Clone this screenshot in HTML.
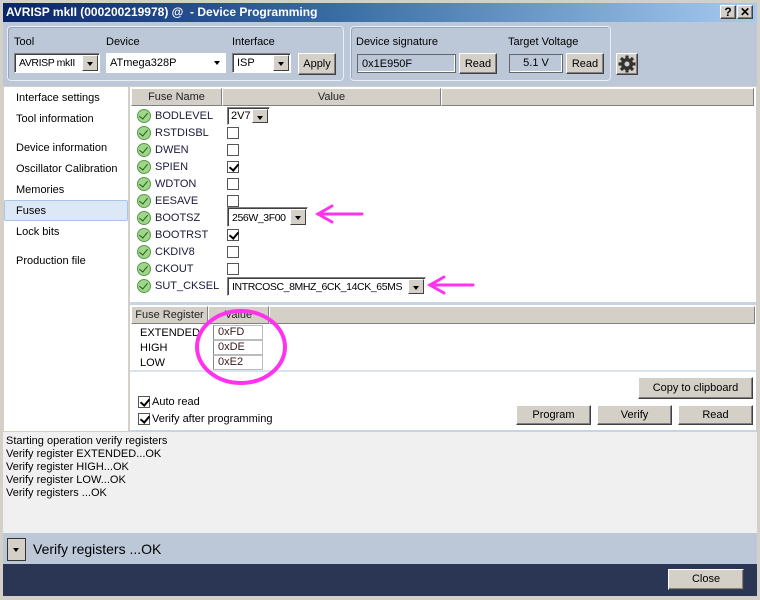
<!DOCTYPE html>
<html><head><meta charset="utf-8"><style>
*{box-sizing:border-box;margin:0;padding:0}
body{width:760px;height:600px;overflow:hidden;background:#d4d0c8;font-family:"Liberation Sans",sans-serif;font-size:11px;color:#000;position:relative}
.a{position:absolute}
.btn{position:absolute;background:#d4d0c8;border:1px solid;border-color:#fff #404040 #404040 #fff;box-shadow:inset -1px -1px #808080;text-align:center;font-size:11px}
.sunk{position:absolute;background:#fff;border:1px solid;border-color:#808080 #fff #fff #808080;box-shadow:inset 1px 1px #404040;white-space:nowrap;overflow:hidden}
.dd{position:absolute;width:16px;background:#d4d0c8;border:1px solid;border-color:#fff #404040 #404040 #fff;top:1px;right:1px;bottom:1px}
.dd:after{content:"";position:absolute;left:4px;top:6px;border-left:3px solid transparent;border-right:3px solid transparent;border-top:4px solid #000}
.hdr{position:absolute;background:#d4d0c8;border:1px solid;border-color:#fff #808080 #808080 #fff;text-align:center;font-size:11px;line-height:17px;color:#222;white-space:nowrap}
.ok{position:absolute;left:137px;width:14px;height:14px;border-radius:50%;background:#9ed68a;border:1px solid #5a9a4a}
.ok:after{content:"";position:absolute;left:3px;top:1px;width:4px;height:7px;border:solid #2a5a1a;border-width:0 1.5px 1.5px 0;transform:rotate(40deg)}
.fn{position:absolute;left:155px;font-size:11px;color:#1a1a3a;top:0}
.cb{position:absolute;left:227px;width:12px;height:12px;border:1px solid #555;background:#fff}
.cb.c:after{content:"";position:absolute;left:3px;top:0px;width:4px;height:7px;border:solid #000;border-width:0 2px 2px 0;transform:rotate(40deg)}
.nav{position:absolute;left:16px;font-size:11px}
.log{position:absolute;left:6px;font-size:11px;line-height:13px}
.tight{letter-spacing:-0.4px;font-size:10.5px}
</style></head><body>
<div class="a" style="left:3px;top:3px;width:754px;height:20px;background:linear-gradient(90deg,#0a246a 0%,#3a6ea5 45%,#a6caf0 100%)"></div>
<div class="a" style="left:6px;top:5px;color:#fff;font-weight:bold;font-size:12px">AVRISP mkII (000200219978) @&nbsp; - Device Programming</div>
<div class="btn" style="left:720px;top:5px;width:16px;height:14px;font-weight:bold;line-height:12px;font-size:12px">?</div>
<div class="btn" style="left:737px;top:5px;width:16px;height:14px;font-weight:bold;line-height:12px;font-size:12px">✕</div>
<div class="a" style="left:3px;top:22px;width:754px;height:64px;background:#bcc7d8"></div>
<div class="a" style="left:7px;top:26px;width:337px;height:55px;border:1px solid #e8eef5;border-radius:4px;box-shadow:inset 1px 1px #98a6bc"></div>
<div class="a" style="left:350px;top:26px;width:261px;height:55px;border:1px solid #e8eef5;border-radius:4px;box-shadow:inset 1px 1px #98a6bc"></div>
<div class="a" style="left:14px;top:36px">Tool</div>
<div class="a" style="left:106px;top:36px">Device</div>
<div class="a" style="left:232px;top:36px">Interface</div>
<div class="a" style="left:356px;top:36px">Device signature</div>
<div class="a" style="left:508px;top:36px">Target Voltage</div>
<div class="sunk" style="left:14px;top:53px;width:86px;height:20px"><span class="a tight" style="left:4px;top:3px">AVRISP mkII</span><div class="dd"></div></div>
<div class="a" style="left:106px;top:53px;width:120px;height:20px;background:#fff"><span class="a" style="left:4px;top:4px">ATmega328P</span><span class="a" style="left:108px;top:8px;border-left:3px solid transparent;border-right:3px solid transparent;border-top:4px solid #000"></span></div>
<div class="sunk" style="left:232px;top:53px;width:59px;height:20px"><span class="a" style="left:4px;top:3px">ISP</span><div class="dd"></div></div>
<div class="btn" style="left:298px;top:53px;width:38px;height:22px;line-height:20px">Apply</div>
<div class="a" style="left:357px;top:54px;width:99px;height:19px;border:1px solid #666;background:#bcc7d8;box-shadow:inset -1px -1px #fff"><span class="a" style="left:4px;top:3px">0x1E950F</span></div>
<div class="btn" style="left:459px;top:53px;width:38px;height:21px;line-height:20px">Read</div>
<div class="a" style="left:509px;top:54px;width:54px;height:19px;border:1px solid #666;background:#bcc7d8;box-shadow:inset -1px -1px #fff;text-align:center;line-height:17px">5.1 V</div>
<div class="btn" style="left:566px;top:53px;width:38px;height:21px;line-height:20px">Read</div>
<div class="btn" style="left:616px;top:53px;width:22px;height:22px">
<svg width="20" height="20" viewBox="0 0 20 20" style="position:absolute;left:0;top:0"><g fill="#333" transform="translate(10,10)"><circle r="6"/><rect x="-1.6" y="-8.5" width="3.2" height="17"/><rect x="-8.5" y="-1.6" width="17" height="3.2"/><rect x="-1.6" y="-8.5" width="3.2" height="17" transform="rotate(45)"/><rect x="-1.6" y="-8.5" width="3.2" height="17" transform="rotate(-45)"/><circle r="2.5" fill="#d4d0c8"/></g></svg></div>
<div class="a" style="left:4px;top:87px;width:124px;height:344px;background:#fff"></div>
<div class="nav" style="top:92px">Interface settings</div>
<div class="nav" style="top:113px">Tool information</div>
<div class="nav" style="top:142px">Device information</div>
<div class="nav" style="top:163px">Oscillator Calibration</div>
<div class="nav" style="top:184px">Memories</div>
<div class="a" style="left:4px;top:200px;width:124px;height:21px;background:#dde8f6;border:1px solid #a8c4e8;border-radius:2px"></div>
<div class="nav" style="top:205px">Fuses</div>
<div class="nav" style="top:226px">Lock bits</div>
<div class="nav" style="top:255px">Production file</div>
<div class="a" style="left:130px;top:87px;width:626px;height:344px;background:#fff"></div>
<div class="hdr" style="left:131px;top:88px;width:91px;height:18px">Fuse Name</div>
<div class="hdr" style="left:222px;top:88px;width:219px;height:18px">Value</div>
<div class="hdr" style="left:441px;top:88px;width:313px;height:18px"></div>
<div class="ok" style="top:109px"></div><div class="fn" style="top:110px">BODLEVEL</div>
<div class="ok" style="top:126px"></div><div class="fn" style="top:127px">RSTDISBL</div>
<div class="ok" style="top:143px"></div><div class="fn" style="top:144px">DWEN</div>
<div class="ok" style="top:160px"></div><div class="fn" style="top:161px">SPIEN</div>
<div class="ok" style="top:177px"></div><div class="fn" style="top:178px">WDTON</div>
<div class="ok" style="top:194px"></div><div class="fn" style="top:195px">EESAVE</div>
<div class="ok" style="top:211px"></div><div class="fn" style="top:212px">BOOTSZ</div>
<div class="ok" style="top:228px"></div><div class="fn" style="top:229px">BOOTRST</div>
<div class="ok" style="top:245px"></div><div class="fn" style="top:246px">CKDIV8</div>
<div class="ok" style="top:262px"></div><div class="fn" style="top:263px">CKOUT</div>
<div class="ok" style="top:279px"></div><div class="fn" style="top:280px">SUT_CKSEL</div>
<div class="sunk" style="left:227px;top:107px;width:43px;height:18px"><span class="a" style="left:3px;top:2px">2V7</span><div class="dd"></div></div>
<div class="cb" style="top:127px"></div>
<div class="cb" style="top:144px"></div>
<div class="cb c" style="top:161px"></div>
<div class="cb" style="top:178px"></div>
<div class="cb" style="top:195px"></div>
<div class="sunk" style="left:227px;top:207px;width:81px;height:20px"><span class="a tight" style="left:4px;top:4px">256W_3F00</span><div class="dd"></div></div>
<div class="cb c" style="top:229px"></div>
<div class="cb" style="top:246px"></div>
<div class="cb" style="top:263px"></div>
<div class="sunk" style="left:227px;top:277px;width:199px;height:19px"><span class="a tight" style="left:4px;top:3px">INTRCOSC_8MHZ_6CK_14CK_65MS</span><div class="dd"></div></div>
<div class="a" style="left:130px;top:302px;width:626px;height:3px;background:#c8d4e2"></div>
<div class="hdr" style="left:131px;top:306px;width:77px;height:18px">Fuse Register</div>
<div class="hdr" style="left:208px;top:306px;width:61px;height:18px">Value</div>
<div class="hdr" style="left:269px;top:306px;width:486px;height:18px"></div>
<div class="a" style="left:140px;top:327px">EXTENDED</div>
<div class="a" style="left:140px;top:342px">HIGH</div>
<div class="a" style="left:140px;top:357px">LOW</div>
<div class="a" style="left:213px;top:325px;width:50px;height:15px;border:1px solid #bbb;border-left-color:#888;padding-left:4px;color:#3a1a1a">0xFD</div>
<div class="a" style="left:213px;top:340px;width:50px;height:15px;border:1px solid #bbb;border-left-color:#888;padding-left:4px;color:#3a1a1a">0xDE</div>
<div class="a" style="left:213px;top:355px;width:50px;height:15px;border:1px solid #bbb;border-left-color:#888;padding-left:4px;color:#3a1a1a">0xE2</div>
<div class="a" style="left:130px;top:370px;width:626px;height:2px;background:#d8e4f0"></div>
<div class="btn" style="left:638px;top:377px;width:115px;height:22px;line-height:20px">Copy to clipboard</div>
<div class="btn" style="left:516px;top:405px;width:75px;height:20px;line-height:18px">Program</div>
<div class="btn" style="left:597px;top:405px;width:75px;height:20px;line-height:18px">Verify</div>
<div class="btn" style="left:678px;top:405px;width:75px;height:20px;line-height:18px">Read</div>
<div class="cb c" style="left:138px;top:396px"></div><div class="a" style="left:152px;top:396px">Auto read</div>
<div class="cb c" style="left:138px;top:413px"></div><div class="a" style="left:152px;top:413px">Verify after programming</div>
<div class="a" style="left:130px;top:430px;width:626px;height:2px;background:#c8d4e2"></div>
<div class="a" style="left:3px;top:432px;width:754px;height:101px;background:#f0f0f0"></div>
<div class="log" style="top:435px">Starting operation verify registers<br>Verify register EXTENDED...OK<br>Verify register HIGH...OK<br>Verify register LOW...OK<br>Verify registers ...OK</div>
<div class="a" style="left:3px;top:533px;width:754px;height:31px;background:#bcc7d8"></div>
<div class="a" style="left:7px;top:538px;width:19px;height:23px;background:#d4d0c8;border:1px solid #333"><span class="a" style="left:5px;top:9px;border-left:3px solid transparent;border-right:3px solid transparent;border-top:4px solid #000"></span></div>
<div class="a" style="left:33px;top:541px;font-size:14px">Verify registers ...OK</div>
<div class="a" style="left:3px;top:564px;width:754px;height:32px;background:#2a3654"></div>
<div class="btn" style="left:668px;top:569px;width:76px;height:21px;line-height:19px">Close</div>
<svg class="a" style="left:0;top:0" width="760" height="600">
<g stroke="#ff33ee" stroke-width="3" fill="none" stroke-linecap="round">
<ellipse cx="241" cy="347" rx="44" ry="36" stroke-width="4"/>
<line x1="318" y1="214" x2="362" y2="214"/><polyline points="332,206 318,214 332,222"/>
<line x1="430" y1="285" x2="473" y2="285"/><polyline points="444,277 430,285 444,293"/>
</g></svg>
</body></html>
